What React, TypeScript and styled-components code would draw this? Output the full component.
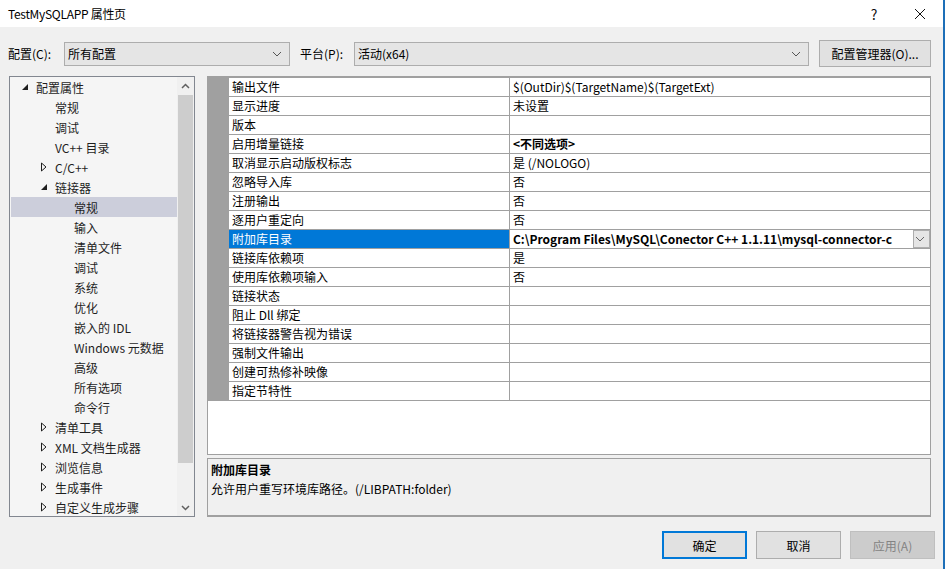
import React from "react";
import styled, { createGlobalStyle } from "styled-components";

const GlobalStyle = createGlobalStyle`
  html, body {
    margin: 0;
    padding: 0;
    background: #f0f0f0;
  }
  * {
    box-sizing: border-box;
  }
  body {
    font-family: "Noto Sans CJK SC", "Noto Sans", sans-serif;
    font-size: 12px;
    color: #000;
  }
`;

const Window = styled.div`
  width: 945px;
  height: 569px;
  display: flex;
  flex-direction: column;
  background: #f0f0f0;
  border-right: 2px solid #1d6fb8;
  overflow: hidden;
`;

const TitleBar = styled.div`
  height: 27px;
  background: #fff;
  display: flex;
  align-items: center;
  padding: 0 0 0 8px;
`;

const TitleText = styled.div`
  flex: 1;
  font-size: 12px;
  letter-spacing: -0.3px;
`;

const TitleButton = styled.div`
  width: 46px;
  height: 27px;
  display: flex;
  align-items: center;
  justify-content: center;
  font-size: 14px;
  color: #111;
`;

const Toolbar = styled.div`
  display: flex;
  align-items: center;
  padding: 13px 12px 0 8px;
  height: 40px;
`;

const ToolLabel = styled.span<{ $width: number }>`
  width: ${(p) => p.$width}px;
  white-space: nowrap;
  flex: none;
`;

const Select = styled.div<{ $width: number }>`
  width: ${(p) => p.$width}px;
  height: 24px;
  background: #e5e5e5;
  border: 1px solid #adadad;
  display: flex;
  align-items: center;
  padding: 0 0 0 3px;
  margin-right: 10px;
  flex: none;
`;

const SelectText = styled.span`
  flex: 1;
`;

const Chevron = styled.svg`
  width: 16px;
  height: 10px;
  margin-right: 4px;
  flex: none;
`;

const ToolButton = styled.div`
  margin-left: auto;
  width: 112px;
  height: 27px;
  background: #e1e1e1;
  border: 1px solid #adadad;
  display: flex;
  align-items: center;
  justify-content: center;
`;

const Body = styled.div`
  display: flex;
  gap: 12px;
  padding: 9px 12px 0 9px;
  height: 450px;
`;

const TreePanel = styled.div`
  width: 186px;
  height: 441px;
  border: 1px solid #828790;
  background: #f5f5f5;
  display: flex;
`;

const TreeList = styled.div`
  flex: 1;
  padding: 0 0 0 1px;
  overflow: hidden;
`;

const TreeItem = styled.div<{ $level: number; $selected?: boolean }>`
  height: 20px;
  display: flex;
  align-items: center;
  padding-left: ${(p) => 6 + p.$level * 19}px;
  background: ${(p) => (p.$selected ? "#cccedb" : "transparent")};
  white-space: nowrap;
  color: #1e1e1e;
`;

const Expander = styled.span`
  width: 19px;
  height: 20px;
  display: flex;
  align-items: center;
  padding-left: 4px;
  flex: none;
`;

const ScrollBar = styled.div`
  width: 17px;
  background: #f0f0f0;
  display: flex;
  flex-direction: column;
  align-items: center;
`;

const ScrollArrow = styled.div`
  height: 17px;
  width: 17px;
  display: flex;
  align-items: center;
  justify-content: center;
`;

const ScrollTrack = styled.div`
  flex: 1;
  width: 100%;
  padding: 1px 1px;
  display: flex;
  flex-direction: column;
`;

const ScrollThumb = styled.div`
  height: 368px;
  background: #cdcdcd;
`;

const RightPanel = styled.div`
  flex: 1;
  display: flex;
  flex-direction: column;
  gap: 3px;
`;

const GridFrame = styled.div`
  height: 380px;
  background: #fff;
  border: 1px solid #a0a0a0;
  border-top-width: 2px;
`;

const Row = styled.div`
  display: grid;
  grid-template-columns: 21px 281px 1fr;
  height: 19px;
`;

const Gutter = styled.div`
  background: #a0a0a0;
`;

const Cell = styled.div<{ $selected?: boolean; $bold?: boolean; $last?: boolean }>`
  border-bottom: 1px solid #a0a0a0;
  border-right: ${(p) => (p.$last ? "none" : "1px solid #a0a0a0")};
  background: ${(p) => (p.$selected ? "#0078d7" : "#fff")};
  color: ${(p) => (p.$selected ? "#fff" : "#000")};
  font-weight: ${(p) => (p.$bold ? 700 : 400)};
  padding: 0 3px;
  line-height: 18px;
  white-space: nowrap;
  overflow: hidden;
  display: flex;
  align-items: center;
`;

const CellText = styled.span`
  flex: 1;
  overflow: hidden;
`;

const DropButton = styled.div`
  width: 17px;
  height: 18px;
  margin-right: -3px;
  background: #e5e5e5;
  border: 1px solid #adadad;
  display: flex;
  align-items: center;
  justify-content: center;
  flex: none;
`;

const Description = styled.div`
  height: 59px;
  border: 1px solid #a0a0a0;
  border-bottom-width: 2px;
  background: #f0f0f0;
  padding: 1px 3px;
  line-height: 19px;
`;

const DescTitle = styled.div`
  font-weight: 700;
`;

const Footer = styled.div`
  display: flex;
  justify-content: flex-end;
  gap: 9px;
  padding: 14px 8px 0 0;
`;

const DialogButton = styled.div<{ $variant?: "default" | "disabled" }>`
  width: 85px;
  height: 28px;
  display: flex;
  align-items: center;
  justify-content: center;
  background: ${(p) => (p.$variant === "disabled" ? "#cccccc" : "#e1e1e1")};
  border: ${(p) =>
    p.$variant === "default"
      ? "2px solid #0078d7"
      : p.$variant === "disabled"
      ? "1px solid #bfbfbf"
      : "1px solid #adadad"};
  color: ${(p) => (p.$variant === "disabled" ? "#838383" : "#000")};
`;

type TreeNode = { label: string; level: number; state?: "open" | "closed"; selected?: boolean };

const treeNodes: TreeNode[] = [
  { label: "配置属性", level: 0, state: "open" },
  { label: "常规", level: 1 },
  { label: "调试", level: 1 },
  { label: "VC++ 目录", level: 1 },
  { label: "C/C++", level: 1, state: "closed" },
  { label: "链接器", level: 1, state: "open" },
  { label: "常规", level: 2, selected: true },
  { label: "输入", level: 2 },
  { label: "清单文件", level: 2 },
  { label: "调试", level: 2 },
  { label: "系统", level: 2 },
  { label: "优化", level: 2 },
  { label: "嵌入的 IDL", level: 2 },
  { label: "Windows 元数据", level: 2 },
  { label: "高级", level: 2 },
  { label: "所有选项", level: 2 },
  { label: "命令行", level: 2 },
  { label: "清单工具", level: 1, state: "closed" },
  { label: "XML 文档生成器", level: 1, state: "closed" },
  { label: "浏览信息", level: 1, state: "closed" },
  { label: "生成事件", level: 1, state: "closed" },
  { label: "自定义生成步骤", level: 1, state: "closed" },
];

type Prop = { name: string; value: string; bold?: boolean; selected?: boolean };

const props: Prop[] = [
  { name: "输出文件", value: "$(OutDir)$(TargetName)$(TargetExt)" },
  { name: "显示进度", value: "未设置" },
  { name: "版本", value: "" },
  { name: "启用增量链接", value: "<不同选项>", bold: true },
  { name: "取消显示启动版权标志", value: "是 (/NOLOGO)" },
  { name: "忽略导入库", value: "否" },
  { name: "注册输出", value: "否" },
  { name: "逐用户重定向", value: "否" },
  {
    name: "附加库目录",
    value: "C:\\Program Files\\MySQL\\Conector C++ 1.1.11\\mysql-connector-c",
    bold: true,
    selected: true,
  },
  { name: "链接库依赖项", value: "是" },
  { name: "使用库依赖项输入", value: "否" },
  { name: "链接状态", value: "" },
  { name: "阻止 Dll 绑定", value: "" },
  { name: "将链接器警告视为错误", value: "" },
  { name: "强制文件输出", value: "" },
  { name: "创建可热修补映像", value: "" },
  { name: "指定节特性", value: "" },
];

const ChevronDown = ({ color = "#555" }: { color?: string }) => (
  <Chevron viewBox="0 0 16 10">
    <path d="M4 3 L8 7 L12 3" fill="none" stroke={color} strokeWidth="1" />
  </Chevron>
);

const ExpandIcon = ({ state }: { state?: "open" | "closed" }) => {
  if (state === "open") {
    return (
      <svg width="8" height="8" viewBox="0 0 8 8">
        <polygon points="7,1 7,7 1,7" fill="#1e1e1e" />
      </svg>
    );
  }
  if (state === "closed") {
    return (
      <svg width="8" height="10" viewBox="0 0 8 10">
        <polygon points="1.5,1 6,5 1.5,9" fill="none" stroke="#1e1e1e" strokeWidth="1" />
      </svg>
    );
  }
  return null;
};

const App = () => {
  return (
    <Window>
      <GlobalStyle />
      <TitleBar>
        <TitleText>TestMySQLAPP 属性页</TitleText>
        <TitleButton>?</TitleButton>
        <TitleButton>
          <svg width="12" height="12" viewBox="0 0 12 12">
            <path d="M1 1 L11 11 M11 1 L1 11" stroke="#111" strokeWidth="1" />
          </svg>
        </TitleButton>
      </TitleBar>

      <Toolbar>
        <ToolLabel $width={56}>配置(C):</ToolLabel>
        <Select $width={226}>
          <SelectText>所有配置</SelectText>
          <ChevronDown />
        </Select>
        <ToolLabel $width={54}>平台(P):</ToolLabel>
        <Select $width={455}>
          <SelectText>活动(x64)</SelectText>
          <ChevronDown />
        </Select>
        <ToolButton>配置管理器(O)...</ToolButton>
      </Toolbar>

      <Body>
        <TreePanel>
          <TreeList>
            {treeNodes.map((node, i) => (
              <TreeItem key={i} $level={node.level} $selected={node.selected}>
                <Expander>
                  <ExpandIcon state={node.state} />
                </Expander>
                {node.label}
              </TreeItem>
            ))}
          </TreeList>
          <ScrollBar>
            <ScrollArrow>
              <svg width="9" height="6" viewBox="0 0 9 6">
                <path d="M1 5 L4.5 1.5 L8 5" fill="none" stroke="#606060" strokeWidth="1.5" />
              </svg>
            </ScrollArrow>
            <ScrollTrack>
              <ScrollThumb />
            </ScrollTrack>
            <ScrollArrow>
              <svg width="9" height="6" viewBox="0 0 9 6">
                <path d="M1 1 L4.5 4.5 L8 1" fill="none" stroke="#606060" strokeWidth="1.5" />
              </svg>
            </ScrollArrow>
          </ScrollBar>
        </TreePanel>

        <RightPanel>
          <GridFrame>
            {props.map((p, i) => (
              <Row key={i}>
                <Gutter />
                <Cell $selected={p.selected}>{p.name}</Cell>
                <Cell $bold={p.bold} $last>
                  <CellText>{p.value}</CellText>
                  {p.selected && (
                    <DropButton>
                      <ChevronDown color="#666" />
                    </DropButton>
                  )}
                </Cell>
              </Row>
            ))}
          </GridFrame>
          <Description>
            <DescTitle>附加库目录</DescTitle>
            <div>允许用户重写环境库路径。(/LIBPATH:folder)</div>
          </Description>
        </RightPanel>
      </Body>

      <Footer>
        <DialogButton $variant="default">确定</DialogButton>
        <DialogButton>取消</DialogButton>
        <DialogButton $variant="disabled">应用(A)</DialogButton>
      </Footer>
    </Window>
  );
};

export default App;
